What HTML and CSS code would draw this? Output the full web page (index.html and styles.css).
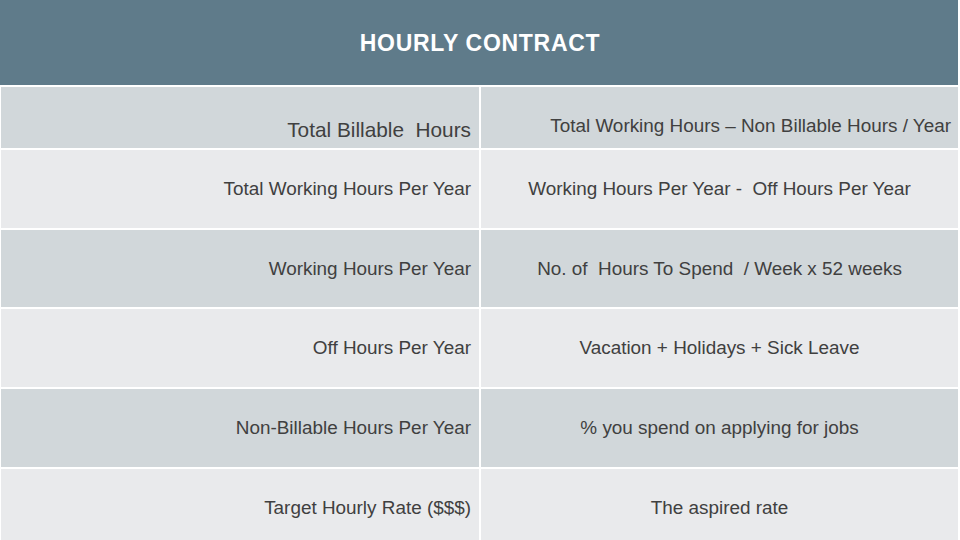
FILE: index.html
```html
<!DOCTYPE html>
<html>
<head>
<meta charset="utf-8">
<link rel="stylesheet" href="styles.css">
</head>
<body>
<div class="table">
  <div class="head">HOURLY CONTRACT</div>
  <div class="cell dark left first"><span class="big">Total Billable&nbsp; Hours</span></div>
  <div class="cell dark rightalign first">Total Working Hours – Non Billable Hours / Year</div>
  <div class="cell light left">Total Working Hours Per Year</div>
  <div class="cell light center">Working Hours Per Year -&nbsp; Off Hours Per Year</div>
  <div class="cell dark left">Working Hours Per Year</div>
  <div class="cell dark center">No. of&nbsp; Hours To Spend&nbsp; / Week x 52 weeks</div>
  <div class="cell light left">Off Hours Per Year</div>
  <div class="cell light center">Vacation + Holidays + Sick Leave</div>
  <div class="cell dark left">Non-Billable Hours Per Year</div>
  <div class="cell dark center">% you spend on applying for jobs</div>
  <div class="cell light left">Target Hourly Rate ($$$)</div>
  <div class="cell light center">The aspired rate</div>
</div>
</body>
</html>
```
FILE: styles.css
```css
html, body {
  margin: 0;
  padding: 0;
  background: #ffffff;
  width: 960px;
  height: 540px;
  overflow: hidden;
}
.table {
  display: grid;
  grid-template-columns: 478px 477px;
  grid-template-rows: 85px 61px 78px 77px 78px 78px 78px;
  column-gap: 2px;
  row-gap: 2px;
  padding-left: 1px;
  font-family: "Liberation Sans", Arial, sans-serif;
  color: #404040;
}
.head {
  grid-column: 1 / 3;
  margin-left: -1px;
  background: #5f7b8a;
  color: #ffffff;
  font-weight: bold;
  font-size: 23px;
  letter-spacing: 0.7px;
  display: flex;
  align-items: center;
  justify-content: center;
  padding-top: 1px;
  padding-left: 2px;
}
.cell {
  display: flex;
  align-items: center;
  font-size: 18.9px;
  white-space: nowrap;
}
.dark { background: #d1d7da; }
.light { background: #e9eaec; }
.left {
  justify-content: flex-end;
  padding-right: 8px;
}
.center {
  justify-content: center;
}
.rightalign {
  justify-content: flex-end;
  padding-right: 7px;
}
.first.left {
  align-items: flex-end;
  padding-bottom: 6px;
}
.first.rightalign {
  align-items: flex-end;
  padding-bottom: 11px;
}
.big { font-size: 20.8px; }
```
